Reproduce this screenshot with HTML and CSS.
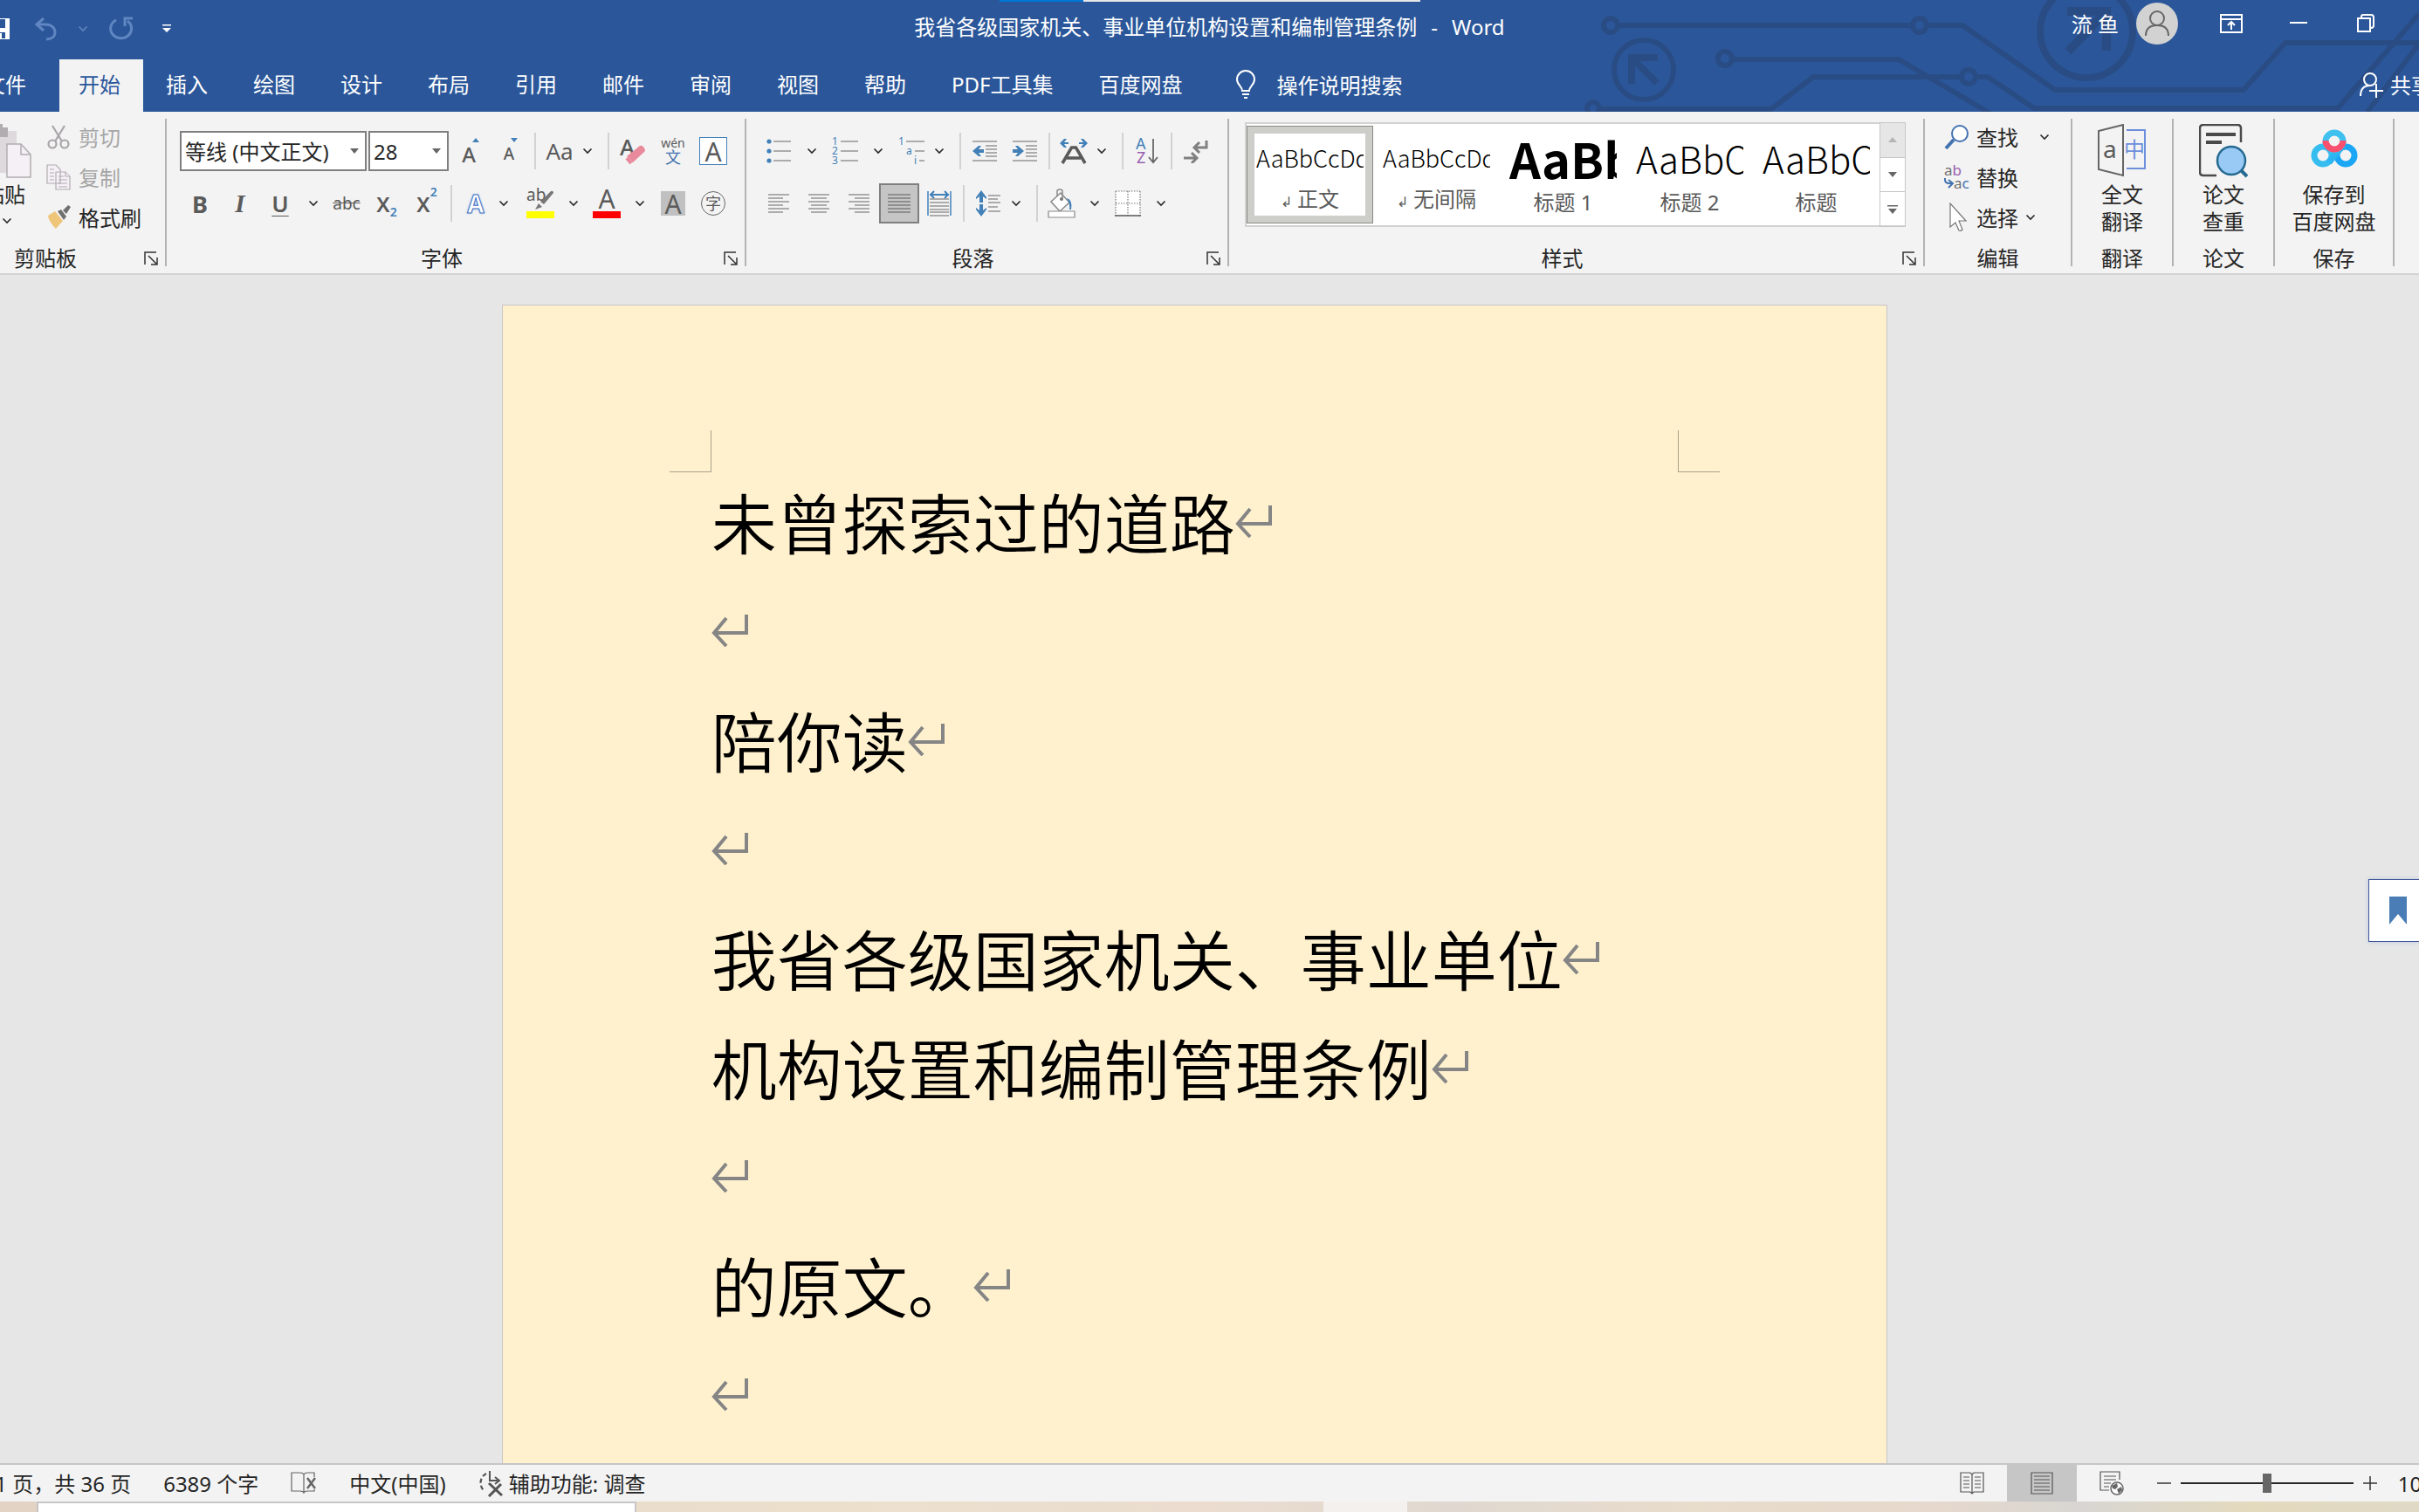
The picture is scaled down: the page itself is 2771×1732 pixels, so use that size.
FILE: index.html
```html
<!DOCTYPE html>
<html lang="zh-CN">
<head>
    <meta charset="UTF-8">
    <meta name="viewport" content="width=device-width, initial-scale=1.0">
    <title>我省各级国家机关、事业单位机构设置和编制管理条例 - Word</title>
    <link rel="stylesheet" href="styles.css">
</head>
<body>
    <!-- Shared symbols -->
    <svg class="symbols" aria-hidden="true">
        <symbol id="chev" viewBox="0 0 12 8"><path d="M1.500 1.500l4.500 4.500 4.500-4.500" fill="none" stroke="currentColor" stroke-width="1.600"/></symbol>
        <symbol id="launcher" viewBox="0 0 16 16"><path d="M1 15V1h13M5 5l9 9M15 7v8H8" fill="none" stroke="#333" stroke-width="1.500"/></symbol>
        <symbol id="mark" viewBox="0 0 42 38"><path d="M40 1v21H3M17 5L3 22l14 15" fill="none" stroke="#858585" stroke-width="4"/></symbol>
        <symbol id="tri" viewBox="0 0 10 6"><path d="M0 0h10L5 6z" fill="currentColor"/></symbol>
    </svg>

    <header class="header">
        <svg class="circuit" viewBox="0 0 991 128" aria-hidden="true">
            <g fill="none" stroke="#2a4c84" stroke-width="6">
                <circle cx="65" cy="29" r="8"/>
                <circle cx="419" cy="29" r="8"/>
                <path d="M73 29h338M427 29h41l106 74h216l48-54h153"/>
                <circle cx="103" cy="80" r="34"/>
                <path d="M119 66H89v30M90 67l28 28" stroke-width="8"/>
                <circle cx="196" cy="67" r="8"/>
                <path d="M204 68h191l105 62"/>
                <circle cx="45" cy="124" r="7"/>
                <path d="M52 125h197l48-37h170"/>
                <circle cx="475" cy="88" r="8"/>
                <path d="M483 88h14l53 36h348l93-108M932 128l59-78"/>
                <circle cx="610" cy="36" r="53" stroke-width="8"/>
                <path d="M588 13h45v45M633 13l-44 46" stroke-width="10"/>
            </g>
        </svg>
        <div class="load-bar"></div>

        <div class="titlebar">
            <div class="quick">
                <button class="btn" aria-label="保存"><svg width="26" height="26" viewBox="0 0 26 26"><path d="M1 1h24v24H1z" fill="#fff"/><path d="M5 2h15v10H5zM8 17h12v7H8z" fill="#2b579a"/><path d="M11 18h5v6h-5z" fill="#fff"/></svg></button>
                <button class="btn dim" aria-label="撤消"><svg width="28" height="28" viewBox="0 0 28 28"><path d="M13 2L5 9l8 7M5 9h10c7 0 11 4 11 9s-4 8-10 8" fill="none" stroke="currentColor" stroke-width="3"/></svg></button>
                <button class="chev dim" aria-label="撤消选项"><svg width="12" height="8"><use href="#chev"/></svg></button>
                <button class="btn dim" aria-label="重复"><svg width="28" height="28" viewBox="0 0 28 28"><path d="M8 4A12 11 0 1 0 21 5M27 2h-9v9" fill="none" stroke="currentColor" stroke-width="3"/></svg></button>
                <button class="btn" aria-label="自定义快速访问工具栏"><svg width="10" height="10" viewBox="0 0 10 10"><path d="M0 0h10v1.500H0zM0 4h10L5 9z" fill="#fff"/></svg></button>
            </div>
            <div class="title"><span>我省各级国家机关、事业单位机构设置和编制管理条例</span><span>-</span><span>Word</span></div>
            <div class="account">
                <span>流 鱼</span>
                <button class="avatar" aria-label="帐户"><svg width="48" height="48" viewBox="0 0 48 48"><circle cx="24" cy="24" r="24" fill="#d2d2d2"/><circle cx="24" cy="18" r="8" fill="none" stroke="#666" stroke-width="2"/><path d="M11 38c0-8 5-12 13-12s13 4 13 12" fill="none" stroke="#666" stroke-width="2"/></svg></button>
                <button class="win" aria-label="功能区显示选项"><svg width="26" height="22" viewBox="0 0 26 22"><path d="M1 1h24v20H1zM1 6h24M13 18V9M9 13l4-4 4 4" fill="none" stroke="#fff" stroke-width="2"/></svg></button>
                <button class="win" aria-label="最小化"><svg width="20" height="22" viewBox="0 0 20 22"><path d="M0 10h20" stroke="#fff" stroke-width="2"/></svg></button>
                <button class="win" aria-label="向下还原"><svg width="20" height="22" viewBox="0 0 20 22"><path d="M1 5h14v15H1zM5 5V3q0-2 2-2h9q3 0 3 3v9q0 3-3 3" fill="none" stroke="#fff" stroke-width="2"/></svg></button>
            </div>
        </div>

        <nav class="tabs">
            <a class="tab file" href="#">文件</a>
            <a class="tab active" href="#">开始</a>
            <a class="tab" href="#">插入</a>
            <a class="tab" href="#">绘图</a>
            <a class="tab" href="#">设计</a>
            <a class="tab" href="#">布局</a>
            <a class="tab" href="#">引用</a>
            <a class="tab" href="#">邮件</a>
            <a class="tab" href="#">审阅</a>
            <a class="tab" href="#">视图</a>
            <a class="tab" href="#">帮助</a>
            <a class="tab" href="#">PDF工具集</a>
            <a class="tab" href="#">百度网盘</a>
            <a class="tell" href="#"><svg width="24" height="34" viewBox="0 0 24 34"><path d="M8 24c0-5-6-7-6-13a10 10 0 0 1 20 0c0 6-6 8-6 13zM8 28h8M10 32h4" fill="none" stroke="#fff" stroke-width="2"/></svg>操作说明搜索</a>
            <a class="share" href="#"><svg width="28" height="30" viewBox="0 0 28 30"><circle cx="13" cy="9" r="7" fill="none" stroke="#fff" stroke-width="2"/><path d="M2 28c0-8 4-12 11-12M20 14v16M12 22h16" fill="none" stroke="#fff" stroke-width="2"/></svg>共享</a>
        </nav>
    </header>

    <main class="ribbon">
        <section class="group clipboard">
            <div class="group-body split">
                <button class="big paste">
                    <svg width="64" height="62" viewBox="0 0 64 62"><path d="M0 8h46v48H0z" fill="#ddd9dd"/><path d="M10 4h6V0h14v4h6v11H10z" fill="#b1adb1"/><path d="M20 4h6v4h-6z" fill="#f3f3f3"/><path d="M35 23h16l11 12v26H35z" fill="#f5f0f6" stroke="#b1adb1" stroke-width="1.500"/><path d="M51 23v12h11" fill="none" stroke="#b1adb1" stroke-width="1.500"/></svg>
                    <span>粘贴</span>
                    <svg width="12" height="8"><use href="#chev"/></svg>
                </button>
                <div class="stack">
                    <button class="small off"><svg width="30" height="30" viewBox="0 0 30 30"><g fill="none" stroke="#a9a5a9" stroke-width="2.200"><circle cx="8" cy="23" r="4.500"/><circle cx="22" cy="23" r="4.500"/><path d="M8 2l11 18M22 2L11 20"/></g></svg>剪切</button>
                    <button class="small off"><svg width="30" height="30" viewBox="0 0 30 30"><g fill="#f5f0f6" stroke="#b0acb0" stroke-width="1.200"><path d="M2 1h10l5 5v16H2zM12 9h11l5 5v15H12z"/><path d="M5 6h5M5 10h5M5 14h5M5 18h5M15 14h6M15 18h10M15 22h10M15 26h10M23 9v5h5"/></g></svg>复制</button>
                    <button class="small"><svg width="30" height="30" viewBox="0 0 30 30"><path d="M3 13l8-5 9 11-8 9C8 24 4 19 3 13z" fill="#efc57a"/><path d="M14 8l4-2 6 8-3 4zM20 7l6-6 3 2-5 8z" fill="#6f6f6f"/></svg>格式刷</button>
                </div>
            </div>
            <div class="group-foot"><span>剪贴板</span><button class="launch" aria-label="剪贴板设置"><svg width="16" height="16"><use href="#launcher"/></svg></button></div>
        </section>

        <section class="group font">
            <div class="group-body">
                <div class="row combos">
                    <label class="combo wide"><select aria-label="字体"><option>等线 (中文正文)</option></select><svg width="10" height="6"><use href="#tri"/></svg></label>
                    <label class="combo"><select aria-label="字号"><option>28</option></select><svg width="10" height="6"><use href="#tri"/></svg></label>
                    <button class="btn grow" aria-label="增大字号">A<svg width="8" height="5" viewBox="0 0 8 5"><path d="M0 5h8L4 0z" fill="#4280b8"/></svg></button>
                    <button class="btn shrink" aria-label="缩小字号">A<svg width="8" height="5" viewBox="0 0 8 5"><path d="M0 0h8L4 5z" fill="#4280b8"/></svg></button>
                    <i class="sep"></i>
                    <button class="btn case">Aa</button>
                    <button class="chev tight" aria-label="更改大小写选项"><svg width="12" height="8"><use href="#chev"/></svg></button>
                    <i class="sep"></i>
                    <button class="btn" aria-label="清除格式"><svg width="30" height="34" viewBox="0 0 30 34"><text class="clear" x="0" y="22">A</text><path d="M8 23L23 11q2-1 4 1l1 2q2 2 0 4L14 31z" fill="#e98a9c"/><path d="M9 25l6 7" stroke="#f3f3f3" stroke-width="2"/><path d="M8 25l5 6" stroke="#e98a9c" stroke-width="4"/></svg></button>
                    <button class="btn pinyin"><span>wén</span><b>文</b></button>
                    <button class="btn"><span class="boxed">A</span></button>
                </div>
                <div class="row">
                    <button class="btn bold">B</button>
                    <button class="btn italic">I</button>
                    <button class="btn underline">U</button>
                    <button class="chev" aria-label="下划线选项"><svg width="12" height="8"><use href="#chev"/></svg></button>
                    <button class="btn strike">abc</button>
                    <button class="btn script">X<sub>2</sub></button>
                    <button class="btn script">X<sup>2</sup></button>
                    <i class="sep"></i>
                    <button class="btn effect">A</button>
                    <button class="chev tight" aria-label="文本效果选项"><svg width="12" height="8"><use href="#chev"/></svg></button>
                    <button class="btn hilite"><span>ab</span><svg width="24" height="22" viewBox="0 0 24 22"><path d="M8 13L20 1q3-1 3 2L12 16zM6 15l4 4-8 3z" fill="#777"/></svg></button>
                    <button class="chev" aria-label="突出显示选项"><svg width="12" height="8"><use href="#chev"/></svg></button>
                    <button class="btn color">A</button>
                    <button class="chev" aria-label="字体颜色选项"><svg width="12" height="8"><use href="#chev"/></svg></button>
                    <button class="btn"><span class="shade">A</span></button>
                    <button class="btn"><span class="ring">字</span></button>
                </div>
            </div>
            <div class="group-foot"><span>字体</span><button class="launch" aria-label="字体设置"><svg width="16" height="16"><use href="#launcher"/></svg></button></div>
        </section>

        <section class="group para">
            <div class="group-body">
                <div class="row">
                    <button class="btn" aria-label="项目符号"><svg width="28" height="28" viewBox="0 0 28 28"><g fill="#4280b8"><circle cx="3" cy="3" r="2.600"/><circle cx="3" cy="14" r="2.600"/><circle cx="3" cy="25" r="2.600"/></g><path d="M8 3h20M8 14h20M8 25h20" stroke="#666" stroke-width="1.200"/></svg></button>
                    <button class="chev" aria-label="项目符号选项"><svg width="12" height="8"><use href="#chev"/></svg></button>
                    <button class="btn" aria-label="编号"><svg width="30" height="32" viewBox="0 0 30 32"><g class="num"><text x="0" y="9">1</text><text x="0" y="20">2</text><text x="0" y="31">3</text></g><path d="M10 5h20M10 16h20M10 27h20" stroke="#666" stroke-width="1.200"/></svg></button>
                    <button class="chev" aria-label="编号选项"><svg width="12" height="8"><use href="#chev"/></svg></button>
                    <button class="btn" aria-label="多级列表"><svg width="30" height="32" viewBox="0 0 30 32"><g class="num"><text x="0" y="9">1</text><text x="9" y="20">a</text><text x="18" y="31">i</text></g><path d="M9 5h21M19 16h11M24 27h6" stroke="#666" stroke-width="1.200"/></svg></button>
                    <button class="chev tight" aria-label="多级列表选项"><svg width="12" height="8"><use href="#chev"/></svg></button>
                    <i class="sep"></i>
                    <button class="btn" aria-label="减少缩进量"><svg width="28" height="24" viewBox="0 0 28 24"><path d="M0 1h28M15 6h13M15 10h13M15 14h13M15 18h13M0 23h28" stroke="#666" stroke-width="1.200"/><path d="M0 12l7-6h3l-3 4h6v4H7l3 4H7z" fill="#4280b8"/></svg></button>
                    <button class="btn" aria-label="增加缩进量"><svg width="28" height="24" viewBox="0 0 28 24"><path d="M0 1h28M15 6h13M15 10h13M15 14h13M15 18h13M0 23h28" stroke="#666" stroke-width="1.200"/><path d="M13 12L6 6H3l3 4H0v4h6l-3 4h3z" fill="#4280b8"/></svg></button>
                    <i class="sep"></i>
                    <button class="btn" aria-label="中文版式"><svg width="32" height="30" viewBox="0 0 32 30"><path d="M3 29L13.500 11h5L29 29M8 23h16" fill="none" stroke="#5a5a5a" stroke-width="3.500"/><path d="M0 6l5-5h3L5 5h5v2H5l3 4H5zM32 6l-5-5h-3l3 4h-5v2h5l-3 4h3z" fill="#4280b8"/></svg></button>
                    <button class="chev tight" aria-label="中文版式选项"><svg width="12" height="8"><use href="#chev"/></svg></button>
                    <i class="sep"></i>
                    <button class="btn" aria-label="排序"><svg width="26" height="32" viewBox="0 0 26 32"><text class="sort-a" x="0" y="14">A</text><text class="sort-z" x="1" y="30">Z</text><path d="M20 2v26M15 23l5 6 5-6" fill="none" stroke="#666" stroke-width="1.800"/></svg></button>
                    <i class="sep"></i>
                    <button class="btn" aria-label="显示编辑标记"><svg width="28" height="28" viewBox="0 0 28 28"><path d="M26 2v8H13M18 4l-6 6 6 6M0 22h14M9 16l6 6-6 6" fill="none" stroke="#808080" stroke-width="3"/></svg></button>
                </div>
                <div class="row">
                    <button class="btn" aria-label="左对齐"><svg width="24" height="24" viewBox="0 0 24 24"><path d="M0 2h24M0 6h17M0 10h24M0 14h17M0 18h24M0 22h17" stroke="#666" stroke-width="1.200"/></svg></button>
                    <button class="btn" aria-label="居中"><svg width="24" height="24" viewBox="0 0 24 24"><path d="M0 2h24M3 6h18M0 10h24M3 14h18M0 18h24M3 22h18" stroke="#666" stroke-width="1.200"/></svg></button>
                    <button class="btn" aria-label="右对齐"><svg width="24" height="24" viewBox="0 0 24 24"><path d="M0 2h24M7 6h17M0 10h24M7 14h17M0 18h24M7 22h17" stroke="#666" stroke-width="1.200"/></svg></button>
                    <button class="btn on" aria-label="两端对齐"><svg width="26" height="24" viewBox="0 0 26 24"><path d="M0 2h26M0 6h26M0 10h26M0 14h26M0 18h26M0 22h26" stroke="#5a5a5a" stroke-width="1.200"/></svg></button>
                    <button class="btn" aria-label="分散对齐"><svg width="28" height="30" viewBox="0 0 28 30"><path d="M1 1v28M27 1v28" stroke="#4280b8" stroke-width="1.500"/><path d="M3 10h22M3 14h22M3 18h22M3 22h22M3 25h22M3 29h22" stroke="#666" stroke-width="1.200"/><path d="M3 5h22M8 1L4 5l4 4M20 1l4 4-4 4" fill="none" stroke="#4280b8" stroke-width="2"/></svg></button>
                    <i class="sep"></i>
                    <button class="btn" aria-label="行距"><svg width="28" height="30" viewBox="0 0 28 30"><path d="M0 8l6-8 6 8v2L8 7v7H4V7l-4 3zM0 22l6 8 6-8v-2l-4 3v-7H4v7l-4-3z" fill="#4280b8"/><path d="M14 6h14M14 10h11M14 14h14M14 19h11M14 24h14" stroke="#666" stroke-width="1.200"/></svg></button>
                    <button class="chev tight" aria-label="行距选项"><svg width="12" height="8"><use href="#chev"/></svg></button>
                    <i class="sep"></i>
                    <button class="btn" aria-label="底纹"><svg width="32" height="34" viewBox="0 0 32 34"><path d="M4 15L15 5l10 11-11 10z" fill="#fff" stroke="#888" stroke-width="1.500"/><path d="M11 9V3q0-2 3-2t3 2v8" fill="none" stroke="#888" stroke-width="1.500"/><circle cx="16" cy="12" r="2" fill="#777"/><path d="M22 11q7 2 5 13h-2q1-7-3-13z" fill="#4280b8"/><path d="M1 26h30v7H1z" fill="#fff" stroke="#888" stroke-width="1.200"/></svg></button>
                    <button class="chev" aria-label="底纹选项"><svg width="12" height="8"><use href="#chev"/></svg></button>
                    <button class="btn" aria-label="边框"><svg width="30" height="30" viewBox="0 0 30 30"><path d="M1 1h28v28H1z" fill="#fff"/><path d="M1 1h28M1 15h28M1 1v28M15 1v28M29 1v28" stroke="#777" stroke-width="1.200" stroke-dasharray="1.500 1.500"/><path d="M0 29h30" stroke="#555" stroke-width="1.500"/></svg></button>
                    <button class="chev" aria-label="边框选项"><svg width="12" height="8"><use href="#chev"/></svg></button>
                </div>
            </div>
            <div class="group-foot"><span>段落</span><button class="launch" aria-label="段落设置"><svg width="16" height="16"><use href="#launcher"/></svg></button></div>
        </section>

        <section class="group styles">
            <div class="gallery">
                <button class="card selected"><span class="sample">AaBbCcDd</span><span class="name"><small>↲</small>正文</span></button>
                <button class="card"><span class="sample">AaBbCcDd</span><span class="name"><small>↲</small>无间隔</span></button>
                <button class="card"><span class="sample h1">AaBb</span><span class="name">标题 1</span></button>
                <button class="card"><span class="sample h2">AaBbC</span><span class="name">标题 2</span></button>
                <button class="card"><span class="sample h2">AaBbC</span><span class="name">标题</span></button>
                <div class="scroller">
                    <button disabled aria-label="上一行"><svg width="10" height="6" viewBox="0 0 10 6"><path d="M0 6h10L5 0z" fill="#b5b5b5"/></svg></button>
                    <button aria-label="下一行"><svg width="10" height="6"><use href="#tri"/></svg></button>
                    <button aria-label="其他"><svg width="12" height="10" viewBox="0 0 12 10"><path d="M0 0h12v1.500H0zM1 4h10L6 10z" fill="#666"/></svg></button>
                </div>
            </div>
            <div class="group-foot"><span>样式</span><button class="launch" aria-label="样式设置"><svg width="16" height="16"><use href="#launcher"/></svg></button></div>
        </section>

        <section class="group edit">
            <div class="stack">
                <button class="small"><svg width="30" height="30" viewBox="0 0 30 30"><circle cx="19" cy="11" r="9" fill="#fff" stroke="#4472b0" stroke-width="2"/><path d="M12 18L3 28" stroke="#4472b0" stroke-width="4"/></svg>查找<svg class="far" width="12" height="8"><use href="#chev"/></svg></button>
                <button class="small"><svg width="30" height="32" viewBox="0 0 30 32"><text class="swap" x="1" y="14">a<tspan class="violet">b</tspan></text><text class="swap" x="12" y="29">a<tspan class="blue">c</tspan></text><path d="M2 17v2q0 4 5 4h3M6 19l5 4-5 5" fill="none" stroke="#4472b0" stroke-width="2"/></svg>替换</button>
                <button class="small"><svg width="30" height="34" viewBox="0 0 30 34"><path d="M8 1v27l6-5 4 9q2 1 4-1l-4-10h8z" fill="#fff" stroke="#777" stroke-width="1.200"/></svg>选择<svg width="12" height="8"><use href="#chev"/></svg></button>
            </div>
            <div class="group-foot"><span>编辑</span></div>
        </section>

        <section class="group narrow">
            <button class="big">
                <svg width="56" height="62" viewBox="0 0 56 62"><path d="M1 8L29 1v58L1 52z" fill="none" stroke="#666" stroke-width="2"/><path d="M33 7h21v44H33" fill="none" stroke="#6c8fdc" stroke-width="2"/><text class="glyph" x="6" y="39">a</text><text class="glyph zh" x="30" y="38">中</text></svg>
                <span>全文<br>翻译</span>
            </button>
            <div class="group-foot"><span>翻译</span></div>
        </section>

        <section class="group narrow">
            <button class="big">
                <svg width="56" height="62" viewBox="0 0 56 62"><path d="M20 59H5q-4 0-4-4V5q0-4 4-4h39q4 0 4 4v16" fill="none" stroke="#4a4a4a" stroke-width="2.500"/><path d="M8 12h34M8 21h18" stroke="#4a4a4a" stroke-width="4"/><circle cx="37" cy="42" r="16" fill="#99c9f5" stroke="#256a91" stroke-width="2.500"/><path d="M48 53l7 7" stroke="#256a91" stroke-width="4"/></svg>
                <span>论文<br>查重</span>
            </button>
            <div class="group-foot"><span>论文</span></div>
        </section>

        <section class="group save">
            <button class="big">
                <svg width="56" height="62" viewBox="0 0 56 62"><g fill="none" stroke-width="7"><circle cx="15" cy="36" r="10" stroke="#35bdf0"/><circle cx="41" cy="36" r="10" stroke="#1ba7f5"/><path d="M22 44l14-17" stroke="#2db4f3"/><circle cx="28" cy="20" r="10" stroke="#3fc0ee"/><path d="M18 19a10 10 0 0 0 20 0" stroke="#f8506f"/></g></svg>
                <span>保存到<br>百度网盘</span>
            </button>
            <div class="group-foot"><span>保存</span></div>
        </section>
    </main>

    <div class="workspace">
        <article class="page">
            <i class="corner left"></i>
            <i class="corner right"></i>
            <p>未曾探索过的道路<svg><use href="#mark"/></svg></p>
            <p><svg><use href="#mark"/></svg></p>
            <p>陪你读<svg><use href="#mark"/></svg></p>
            <p><svg><use href="#mark"/></svg></p>
            <p>我省各级国家机关、事业单位<svg><use href="#mark"/></svg></p>
            <p>机构设置和编制管理条例<svg><use href="#mark"/></svg></p>
            <p><svg><use href="#mark"/></svg></p>
            <p>的原文。<svg><use href="#mark"/></svg></p>
            <p><svg><use href="#mark"/></svg></p>
        </article>
        <button class="bookmark" aria-label="书签"><svg width="20" height="32" viewBox="0 0 20 32"><path d="M0 0h20v32L10 20 0 32z" fill="#4a7db5"/></svg></button>
    </div>

    <footer class="status">
        <div class="status-info">
            <span>第 1 页，共 36 页</span>
            <span>6389 个字</span>
            <svg width="30" height="26" viewBox="0 0 30 26"><path d="M15 3Q14 1 11 1H1v21h10q3 0 4 2 1-2 4-2h8v-2M27 6V1h-8q-3 0-4 2v21" fill="none" stroke="#666" stroke-width="1.200"/><path d="M19 7l9 12M28 7l-9 12" stroke="#666" stroke-width="2.500"/></svg>
            <span>中文(中国)</span>
            <span class="access"><svg width="30" height="32" viewBox="0 0 30 32"><path d="M9 5a12 12 0 0 0-2 20" fill="none" stroke="#555" stroke-width="2.200" stroke-dasharray="5 3"/><path d="M13 2v11h9M19 9l5 4-5 4" fill="none" stroke="#555" stroke-width="2"/><path d="M12 16l15 14M26 17L12 31" stroke="#555" stroke-width="3"/></svg>辅助功能: 调查</span>
        </div>
        <div class="status-view">
            <button class="view" aria-label="阅读视图"><svg width="28" height="26" viewBox="0 0 28 26"><path d="M1 1h11l2 2 2-2h11v22H16l-2 2-2-2H1zM14 3v21M4 6h7M4 10h7M4 14h7M4 18h7M17 6h7M17 10h7M17 14h7M17 18h7" fill="none" stroke="#555" stroke-width="1.200"/></svg></button>
            <button class="view current" aria-label="页面视图"><svg width="26" height="26" viewBox="0 0 26 26"><path d="M1 1h24v24H1zM4 5h18M4 9h18M4 13h18M4 17h18M4 21h18" fill="none" stroke="#555" stroke-width="1.200"/></svg></button>
            <button class="view" aria-label="Web 版式视图"><svg width="28" height="28" viewBox="0 0 28 28"><path d="M11 22H1V1h22v9M5 6h14M5 10h14M5 14h8M5 18h6" fill="none" stroke="#555" stroke-width="1.200"/><circle cx="20" cy="20" r="7" fill="#fff" stroke="#666" stroke-width="1.500"/><path d="M14 17l6-3 1 4-3 3-3-1zM20 21l5-3 1 4-4 4z" fill="#666"/></svg></button>
            <div class="zoomer">
                <button aria-label="缩小"><svg width="16" height="16" viewBox="0 0 16 16"><path d="M0 8h16" stroke="#333" stroke-width="1.500"/></svg></button>
                <input class="zoom" type="range" min="0" max="100" value="50" aria-label="显示比例">
                <button aria-label="放大"><svg width="16" height="16" viewBox="0 0 16 16"><path d="M0 8h16M8 0v16" stroke="#333" stroke-width="1.500"/></svg></button>
            </div>
            <span class="percent">100%</span>
        </div>
    </footer>
    <div class="taskbar"><div class="task"></div><div class="task faint"></div></div>
</body>
</html>
```
FILE: styles.css
```css
* {
    box-sizing: border-box;
}
body {
    margin: 0;
    height: 100vh;
    display: flex;
    flex-direction: column;
    overflow: hidden;
    background: #e6e6e6;
    color: #262626;
    font-family: "Noto Sans", "Noto Sans CJK SC", sans-serif;
    font-size: 24px;
    line-height: 31px;
}
button,
select {
    font: inherit;
    color: inherit;
    background: none;
    border: none;
    padding: 0;
}
a {
    color: inherit;
    text-decoration: none;
}
svg {
    display: block;
    flex: none;
}
.symbols {
    display: none;
}

/* Title bar and tabs */
.header {
    position: relative;
    background: #2b579a;
    color: white;
    overflow: hidden;
    flex: none;
}
.circuit {
    position: absolute;
    top: 0;
    right: 0;
    width: 991px;
    height: 128px;
}
.load-bar {
    position: absolute;
    top: 0;
    left: 0;
    right: 0;
    width: 482px;
    height: 2px;
    margin: 0 auto;
    background: linear-gradient(90deg, #0078d7 20%, #e6e6e6 20%);
}
.titlebar {
    position: relative;
    display: grid;
    grid-template-columns: 1fr auto 1fr;
    align-items: center;
    height: 68px;
    padding-bottom: 8px;
}
.quick {
    display: flex;
    align-items: center;
    gap: 6px;
    margin-left: -24px;
    padding-top: 6px;
}
.dim {
    color: #5f86c0;
}
.title {
    display: flex;
    gap: 16px;
    white-space: nowrap;
}
.account {
    display: flex;
    justify-content: flex-end;
    align-items: center;
    padding-right: 23px;
    padding-bottom: 6px;
    white-space: nowrap;
}
.avatar {
    margin: 0 22px 0 20px;
}
.win {
    display: flex;
    justify-content: center;
    align-items: center;
    width: 77px;
    height: 46px;
}
.tabs {
    position: relative;
    display: flex;
    gap: 4px;
    height: 60px;
    margin-left: -40px;
    white-space: nowrap;
}
.tab {
    padding: 13px 26px 16px 22px;
}
.tab.file {
    margin-right: 8px;
}
.tab.active {
    background: #f3f3f3;
    color: #2b579a;
}
.tell,
.share {
    display: flex;
    align-items: center;
    padding-bottom: 2px;
}
.tell {
    gap: 24px;
    padding-left: 30px;
}
.share {
    gap: 8px;
    margin-left: auto;
    margin-right: -15px;
}

/* Ribbon */
.ribbon {
    display: flex;
    flex: none;
    height: 187px;
    padding: 8px 28px 8px 0;
    background: #f3f3f3;
    border-bottom: 2px solid #d2d2d2;
}
.group {
    display: flex;
    flex-direction: column;
    flex: none;
    border-right: 2px solid #b3b3b3;
    white-space: nowrap;
}
.group-body {
    flex: 1;
    padding-top: 14px;
}
.group-foot {
    display: flex;
    align-items: center;
    height: 31px;
    margin-top: auto;
    margin-bottom: -6px;
}
.group-foot span {
    flex: 1;
    text-align: center;
}
.launch {
    width: 32px;
    padding-left: 8px;
}
.row {
    display: flex;
    align-items: center;
    height: 46px;
}
.row + .row {
    margin-top: 14px;
}
.btn {
    display: flex;
    justify-content: center;
    align-items: center;
    width: 46px;
    height: 46px;
    color: #5a5a5a;
}
.btn.dim {
    color: #5f86c0;
}
.chev {
    display: flex;
    justify-content: center;
    width: 30px;
}
.chev.tight {
    width: 28px;
    justify-content: flex-start;
    padding-left: 3px;
}
.sep {
    width: 2px;
    height: 42px;
    margin: 0 4px;
    background: #d2d2d2;
}

/* Clipboard */
.clipboard {
    width: 244px;
    margin-left: -53px;
}
.split {
    display: flex;
    padding-top: 0;
    padding-left: 13px;
}
.big {
    display: flex;
    flex-direction: column;
    align-items: center;
    gap: 3px;
    padding-top: 6px;
}
.paste {
    width: 92px;
    padding-right: 2px;
}
.paste svg:last-child {
    margin: 8px 0 0 6px;
}
.stack {
    display: flex;
    flex-direction: column;
    margin-top: -2px;
}
.small {
    display: flex;
    align-items: center;
    gap: 8px;
    height: 46px;
}
.off {
    color: #a6a6a6;
}

/* Font */
.font {
    padding-left: 15px;
    padding-right: 13px;
}
.font .group-foot {
    margin-left: -15px;
    margin-right: -13px;
}
.combo {
    position: relative;
    width: 92px;
    margin-right: 2px;
}
.combo.wide {
    width: 214px;
}
.combo select {
    appearance: none;
    width: 100%;
    height: 46px;
    padding-left: 4px;
    background: white;
    border: 2px solid #7f7f7f;
}
.combo svg {
    position: absolute;
    right: 9px;
    top: 20px;
    color: #666;
    pointer-events: none;
}
.grow,
.shrink {
    font-size: 24px;
    font-weight: 500;
    align-items: flex-end;
    padding-bottom: 4px;
}
.grow svg,
.shrink svg {
    align-self: flex-start;
    margin-top: 8px;
    margin-left: -4px;
}
.shrink {
    font-size: 19px;
}
.case {
    font-size: 26px;
}
.clear {
    fill: #5a5a5a;
    font-size: 26px;
    font-weight: 500;
}
.pinyin {
    flex-direction: column;
    font-size: 14px;
    line-height: 14px;
}
.pinyin b {
    color: #4472b0;
    font-size: 18px;
    font-weight: 400;
    line-height: 19px;
}
.boxed,
.shade,
.ring {
    display: flex;
    justify-content: center;
    align-items: center;
    width: 32px;
    height: 32px;
    font-size: 30px;
}
.boxed {
    background: white;
    border: 1px solid #4280b8;
}
.shade {
    width: 28px;
    height: 28px;
    background: #c0c0c0;
}
.ring {
    width: 28px;
    height: 28px;
    border: 1px solid #666;
    border-radius: 50%;
    font-size: 18px;
}
.bold {
    font-size: 27px;
    font-weight: 700;
}
.italic {
    font: italic 700 29px "Liberation Serif", serif;
}
.underline {
    font-size: 26px;
    font-weight: 600;
    text-decoration: underline;
    text-decoration-thickness: 1px;
    text-underline-offset: 4px;
}
.strike {
    font-size: 19px;
    text-decoration: line-through;
}
.script {
    font-size: 24px;
    font-weight: 600;
}
.script sub,
.script sup {
    color: #4280b8;
    font-size: 14px;
    line-height: 14px;
}
.script sub {
    align-self: flex-end;
    margin-bottom: 6px;
}
.script sup {
    align-self: flex-start;
    margin-top: 3px;
}
.effect {
    color: white;
    font-size: 28px;
    font-weight: 700;
    -webkit-text-stroke: 1px #4472c4;
    text-shadow: 0 0 3px #7da7e8;
}
.hilite {
    position: relative;
    align-items: flex-start;
    justify-content: flex-start;
    padding-left: 7px;
    font-size: 19px;
    line-height: 26px;
    background: linear-gradient(#ff0, #ff0) center 32px / 32px 8px no-repeat;
}
.hilite svg {
    position: absolute;
    left: 15px;
    top: 8px;
}
.color {
    align-items: flex-start;
    font-size: 30px;
    line-height: 36px;
    background: linear-gradient(#f00, #f00) center 32px / 32px 8px no-repeat;
}

/* Paragraph */
.para {
    padding-left: 14px;
    padding-right: 13px;
}
.para .group-foot {
    margin-left: -14px;
    margin-right: -13px;
}
.btn.on {
    background: #c5c5c5;
    border: 2px solid #7f7f7f;
}
.num {
    fill: #4280b8;
    font-size: 12px;
}
.sort-a,
.sort-z {
    fill: #4280b8;
    font-size: 18px;
}
.sort-z {
    fill: #9860b0;
}

/* Style gallery */
.styles {
    flex: 1;
    min-width: 0;
    padding-top: 4px;
    padding-left: 18px;
}
.styles .group-foot {
    margin-left: -18px;
}
.gallery {
    display: flex;
    height: 120px;
    margin-right: 20px;
    background: white;
    border: 2px solid #d2d2d2;
    border-right: 0;
}
.card {
    display: flex;
    flex-direction: column;
    flex: 1;
    min-width: 0;
    margin: 2px 0;
    padding: 8px 10px;
    border: 1px solid transparent;
}
.card.selected {
    border-color: #8a8a86;
    box-shadow: inset 0 0 0 8px #cdcdc9;
}
.sample {
    width: 100%;
    height: 63px;
    overflow: hidden;
    color: black;
    font-family: "Noto Sans CJK SC", sans-serif;
    font-size: 27px;
    font-weight: 300;
    line-height: 56px;
    text-align: left;
}
.sample.h1 {
    font-size: 56px;
    font-weight: 700;
}
.sample.h2 {
    font-size: 42px;
}
.name {
    width: 100%;
    color: #5a5a5a;
    text-align: center;
}
.name small {
    font-size: 16px;
    margin-right: 6px;
}
.scroller {
    display: flex;
    flex-direction: column;
    flex: none;
    width: 30px;
    margin: -2px 0;
    border: 1px solid #c6c6c6;
}
.scroller button {
    display: flex;
    flex: 1;
    justify-content: center;
    align-items: center;
    color: #666;
}
.scroller button + button {
    border-top: 1px solid #c6c6c6;
}
.scroller button:disabled {
    background: #e6e6e6;
}

/* Editing and add-in groups */
.edit {
    width: 169px;
}
.edit .stack {
    padding-left: 21px;
}
.edit .far {
    margin-left: 16px;
}
.swap {
    fill: #707070;
    font-size: 17px;
}
.violet {
    fill: #9860b0;
}
.blue {
    fill: #4472b0;
}
.narrow {
    width: 116px;
}
.glyph {
    fill: #5a5a5a;
    font-size: 28px;
}
.glyph.zh {
    fill: #6c8fdc;
    font-size: 24px;
}
.save {
    width: 137px;
}

/* Document */
.workspace {
    position: relative;
    display: flex;
    justify-content: center;
    flex: 1;
    min-height: 0;
    padding: 34px 34px 0 0;
    overflow: hidden;
}
.page {
    position: relative;
    width: 58%;
    height: 2240px;
    padding: 184px 239px;
    background: #fff1ce;
    border: 1px solid #c6c6c6;
    color: black;
    font-family: "Noto Sans CJK SC", sans-serif;
    font-size: 75px;
    font-weight: 350;
    line-height: 125px;
}
.page p {
    display: flex;
    align-items: center;
    height: 125px;
    margin: 0;
    white-space: nowrap;
}
.page p svg {
    width: 42px;
    height: 38px;
}
.corner {
    position: absolute;
    top: 143px;
    width: 48px;
    height: 48px;
    border-bottom: 1px solid #a9a28c;
}
.corner.left {
    left: 191px;
    border-right: 1px solid #a9a28c;
}
.corner.right {
    right: 191px;
    border-left: 1px solid #a9a28c;
}
.bookmark {
    position: absolute;
    right: 0;
    top: 692px;
    width: 58px;
    height: 72px;
    padding-left: 23px;
    background: white;
    border: 1px solid #3f5699;
    border-right: 0;
    box-shadow: 0 0 5px #b8c4dc;
}

/* Status bar */
.status {
    display: flex;
    justify-content: space-between;
    flex: none;
    height: 44px;
    background: #f3f3f3;
    border-top: 2px solid #c6c6c6;
    white-space: nowrap;
    overflow: hidden;
}
.status-info,
.status-view {
    display: flex;
    align-items: center;
}
.status-info {
    gap: 37px;
    margin-left: -36px;
}
.access {
    display: flex;
    align-items: center;
    gap: 5px;
}
.view {
    display: flex;
    justify-content: center;
    align-items: center;
    width: 80px;
    height: 100%;
}
.view.current {
    background: #c6c6c6;
}
.zoomer {
    display: flex;
    align-items: center;
    gap: 11px;
    margin: 0 24px 0 12px;
}
.zoom {
    appearance: none;
    width: 198px;
    height: 22px;
    margin: 0;
    background: linear-gradient(#262626, #262626) center / 100% 2px no-repeat;
}
.zoom::-webkit-slider-thumb {
    appearance: none;
    width: 10px;
    height: 22px;
    background: #666;
}
.percent {
    margin-right: -37px;
}
.taskbar {
    display: flex;
    flex: none;
    gap: 787px;
    height: 12px;
    padding-left: 42px;
    background: linear-gradient(90deg, #e2d3c5, #ece0cd 35%, #ebdccf 50%, #e0d8d0 60%, #e8dccb 70%, #e6d8cc 80%, #d8d6d2 86%, #e3d9bd 93%, #e0d9c6);
}
.task {
    width: 687px;
    background: white;
    border: 2px solid #c6c6c6;
    border-bottom: 0;
}
.task.faint {
    width: 96px;
    background: #f4f0ee;
    border: 0;
}
```
